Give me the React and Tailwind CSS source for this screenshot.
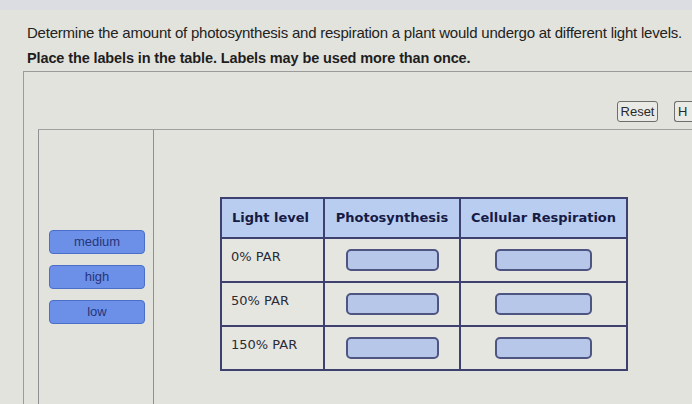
import React from "react";

const labels = ["medium", "high", "low"];
const rows = ["0% PAR", "50% PAR", "150% PAR"];

function DropBox({ w }) {
  return (
    <div
      className={`mx-auto h-[22px] rounded-[5px] border-2 border-[#4f5582] bg-[#b7c7ea] ${w}`}
    />
  );
}

export default function App() {
  return (
    <div className="relative h-[404px] w-[692px] overflow-hidden bg-[#e3e3dd] font-['Liberation_Sans',Arial,sans-serif]">
      {/* top strip */}
      <div className="h-[10px] bg-[#dcdce3]" />

      <div className="pl-[27px] pt-[14px]">
        <p className="whitespace-nowrap text-[15px] leading-[18px] tracking-[-0.22px] text-[#222]">
          Determine the amount of photosynthesis and respiration a plant would undergo at different light levels.
        </p>
        <p className="mt-[7px] text-[14.5px] font-bold leading-[18px] tracking-[-0.12px] text-[#1e1e1e]">
          Place the labels in the table. Labels may be used more than once.
        </p>
      </div>

      {/* activity container */}
      <div className="ml-[23px] mt-[4px] border-l border-t border-[#9b9b9b]">
        {/* toolbar */}
        <div className="flex h-[57px] items-end justify-end gap-[16px] pb-[7px]">
          <button className="h-[21px] w-[41px] rounded-[3px] border border-[#6e6e6e] bg-[#e9e9e5] text-[13px] font-medium leading-none text-[#2a2a2a]">
            Reset
          </button>
          <button className="h-[21px] w-[18px] rounded-l-[3px] border border-r-0 border-[#6e6e6e] bg-[#e9e9e5] pl-[3px] text-left text-[13px] leading-none text-[#2a2a2a]">
            H
          </button>
        </div>

        <div className="ml-[14px] flex h-[310px] border-t border-[#a0a0a0]">
          {/* label bank */}
          <div className="flex w-[116px] flex-col gap-[11px] border-l border-r border-[#8f8f95] pl-[10px] pt-[100px]">
            {labels.map((l) => (
              <div
                key={l}
                className="flex h-[24px] w-[96px] items-center justify-center rounded-[4px] border border-[#4b6fc9] bg-[#6c90e8] text-[13px] text-[#27357a]"
              >
                {l}
              </div>
            ))}
          </div>

          {/* table area */}
          <div className="pl-[66px] pt-[67px]">
            <table className="border-collapse border-2 border-[#3e4170] font-['DejaVu_Sans',Verdana,sans-serif] text-[13px]">
              <thead>
                <tr className="h-[40px] bg-[#b9cdf0] text-[#161a45]">
                  <th className="w-[103px] border-2 border-[#3e4170] pl-[10px] text-left font-bold">Light level</th>
                  <th className="w-[136px] border-2 border-[#3e4170] text-center font-bold">Photosynthesis</th>
                  <th className="w-[167px] border-2 border-[#3e4170] text-center font-bold">Cellular Respiration</th>
                </tr>
              </thead>
              <tbody>
                {rows.map((r) => (
                  <tr key={r} className="h-[44px] bg-[#e6e6e1]">
                    <td className="border-2 border-[#3e4170] pl-[9px] pt-[8px] align-top text-[#2b2b35]">{r}</td>
                    <td className="border-2 border-[#3e4170]">
                      <DropBox w="w-[93px]" />
                    </td>
                    <td className="border-2 border-[#3e4170]">
                      <DropBox w="w-[97px]" />
                    </td>
                  </tr>
                ))}
              </tbody>
            </table>
          </div>
        </div>
      </div>
    </div>
  );
}
